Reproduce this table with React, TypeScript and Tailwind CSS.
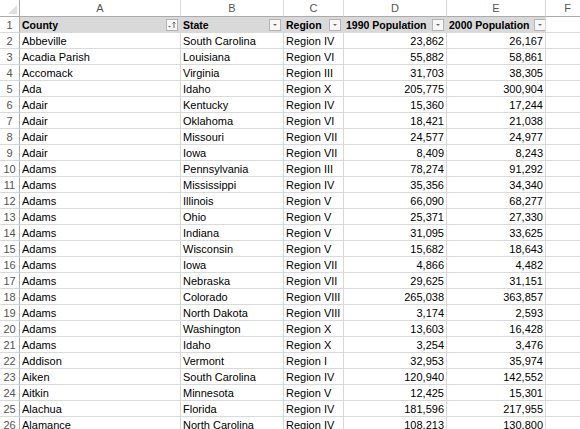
const rows: [string, string, string, string, string][] = [
  ["Abbeville", "South Carolina", "Region IV", "23,862", "26,167"],
  ["Acadia Parish", "Louisiana", "Region VI", "55,882", "58,861"],
  ["Accomack", "Virginia", "Region III", "31,703", "38,305"],
  ["Ada", "Idaho", "Region X", "205,775", "300,904"],
  ["Adair", "Kentucky", "Region IV", "15,360", "17,244"],
  ["Adair", "Oklahoma", "Region VI", "18,421", "21,038"],
  ["Adair", "Missouri", "Region VII", "24,577", "24,977"],
  ["Adair", "Iowa", "Region VII", "8,409", "8,243"],
  ["Adams", "Pennsylvania", "Region III", "78,274", "91,292"],
  ["Adams", "Mississippi", "Region IV", "35,356", "34,340"],
  ["Adams", "Illinois", "Region V", "66,090", "68,277"],
  ["Adams", "Ohio", "Region V", "25,371", "27,330"],
  ["Adams", "Indiana", "Region V", "31,095", "33,625"],
  ["Adams", "Wisconsin", "Region V", "15,682", "18,643"],
  ["Adams", "Iowa", "Region VII", "4,866", "4,482"],
  ["Adams", "Nebraska", "Region VII", "29,625", "31,151"],
  ["Adams", "Colorado", "Region VIII", "265,038", "363,857"],
  ["Adams", "North Dakota", "Region VIII", "3,174", "2,593"],
  ["Adams", "Washington", "Region X", "13,603", "16,428"],
  ["Adams", "Idaho", "Region X", "3,254", "3,476"],
  ["Addison", "Vermont", "Region I", "32,953", "35,974"],
  ["Aiken", "South Carolina", "Region IV", "120,940", "142,552"],
  ["Aitkin", "Minnesota", "Region V", "12,425", "15,301"],
  ["Alachua", "Florida", "Region IV", "181,596", "217,955"],
  ["Alamance", "North Carolina", "Region IV", "108,213", "130,800"],
];

const grid = "grid grid-cols-[20px_161px_103px_60px_103px_99px_44px]";
const cell = "h-4 border-r border-b border-[#d9d9d9] px-[2px] pt-px leading-[14px] whitespace-nowrap overflow-hidden";

function FilterButton({ sorted }: { sorted?: boolean }) {
  return (
    <span className="ml-auto flex h-[12px] w-[12px] shrink-0 items-center justify-center border border-[#b4b4b4] bg-[#f7f7f7]">
      <svg width="10" height="10" viewBox="0 0 10 10" aria-hidden>
        {sorted ? (
          <>
            <path d="M1 6h3L2.5 7.5z" fill="#6a6a6a" />
            <path d="M7 8V2M5.5 3.5 7 2l1.5 1.5" stroke="#6a6a6a" strokeWidth="1" fill="none" />
          </>
        ) : (
          <path d="M3 4h4L5 6z" fill="#6a6a6a" />
        )}
      </svg>
    </span>
  );
}

export default function App() {
  const heads = ["County", "State", "Region", "1990 Population", "2000 Population"];
  return (
    <div className="h-[429px] w-[580px] overflow-hidden bg-white font-['Liberation_Sans',Arial,sans-serif] text-[11px] text-black">
      {/* column letters */}
      <div className={`${grid} h-[17px] text-[#555]`}>
        <div className="relative border-r border-b border-[#ababab]">
          <svg className="absolute right-[2px] bottom-[2px]" width="9" height="9" aria-hidden>
            <path d="M9 0V9H0z" fill="#dfdfdf" />
          </svg>
        </div>
        {["A", "B", "C", "D", "E", "F"].map((l) => (
          <div key={l} className="h-[17px] border-r border-b border-[#ababab] border-r-[#dadada] text-center leading-[16px]">
            {l}
          </div>
        ))}
      </div>

      {/* table header row */}
      <div className={grid}>
        <div className={`${cell} border-r-[#ababab] text-center text-[#555]`}>1</div>
        {heads.map((h, i) => (
          <div key={h} className={`${cell} flex items-center gap-1 bg-[#d9d9d9] pt-0 text-[10.5px] font-bold`}>
            <span>{h}</span>
            <FilterButton sorted={i === 0} />
          </div>
        ))}
        <div className={cell} />
      </div>

      {rows.map((r, i) => (
        <div key={i} className={grid}>
          <div className={`${cell} border-r-[#ababab] text-center text-[#555]`}>{i + 2}</div>
          <div className={cell}>{r[0]}</div>
          <div className={cell}>{r[1]}</div>
          <div className={cell}>{r[2]}</div>
          <div className={`${cell} text-right`}>{r[3]}</div>
          <div className={`${cell} text-right`}>{r[4]}</div>
          <div className={cell} />
        </div>
      ))}
    </div>
  );
}
